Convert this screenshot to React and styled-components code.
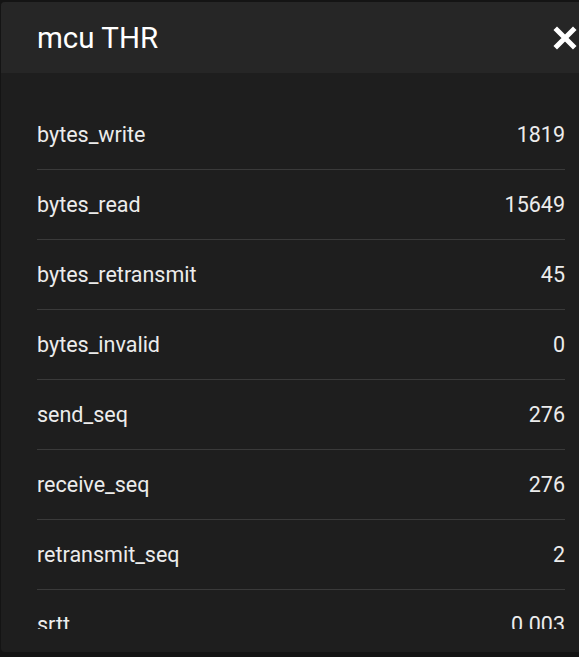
import React from 'react'
import styled, { createGlobalStyle } from 'styled-components'

const GlobalStyle = createGlobalStyle`
    html, body {
        margin: 0;
        padding: 0;
        background: #141414;
        overflow: hidden;
        font-family: Roboto, "Liberation Sans", sans-serif;
    }
`;

const Page = styled.div`
    width: 579px;
    height: 657px;
    overflow: hidden;
    padding: 2px 0 0 1px;
    box-sizing: border-box;
`;

const Dialog = styled.div`
    width: 600px;
    height: 650px;
    background: #1e1e1e;
    border-radius: 4px;
    display: flex;
    flex-direction: column;
    overflow: hidden;
`;

const Header = styled.div`
    height: 71px;
    flex-shrink: 0;
    background: #262626;
    display: flex;
    align-items: center;
    justify-content: space-between;
    padding: 0 24px 0 36px;
`;

const Title = styled.h1`
    margin: 0;
    font-size: 29.5px;
    font-weight: 400;
    color: #fff;
`;

const Close = styled.button`
    border: none;
    background: none;
    padding: 0;
    width: 24px;
    height: 24px;
    cursor: pointer;
    display: flex;
`;

const Body = styled.div`
    flex: 1;
    overflow: hidden;
    padding: 27px 36px 0 36px;
    margin-bottom: 23px;
`;

const Row = styled.div`
    height: 69px;
    display: flex;
    align-items: center;
    justify-content: space-between;
    font-size: 21.5px;
    color: #ececec;
    border-bottom: 1px solid #3a3a3a;
`;

const stats = [
    ['bytes_write', '1819'],
    ['bytes_read', '15649'],
    ['bytes_retransmit', '45'],
    ['bytes_invalid', '0'],
    ['send_seq', '276'],
    ['receive_seq', '276'],
    ['retransmit_seq', '2'],
    ['srtt', '0.003'],
    ['rttvar', '0.001'],
    ['rto', '0.025'],
];

const App = () => {
  return (
    <Page>
        <GlobalStyle />
        <Dialog>
            <Header>
                <Title>mcu THR</Title>
                <Close>
                    <svg width="24" height="24" viewBox="0 0 24 24">
                        <path d="M4 4 L20 20 M20 4 L4 20" stroke="#fff" strokeWidth="5" strokeLinecap="square" />
                    </svg>
                </Close>
            </Header>
            <Body>
                {stats.map(([k, v]) => (
                    <Row key={k}>
                        <span>{k}</span>
                        <span>{v}</span>
                    </Row>
                ))}
            </Body>
        </Dialog>
    </Page>
  )
}

export default App
